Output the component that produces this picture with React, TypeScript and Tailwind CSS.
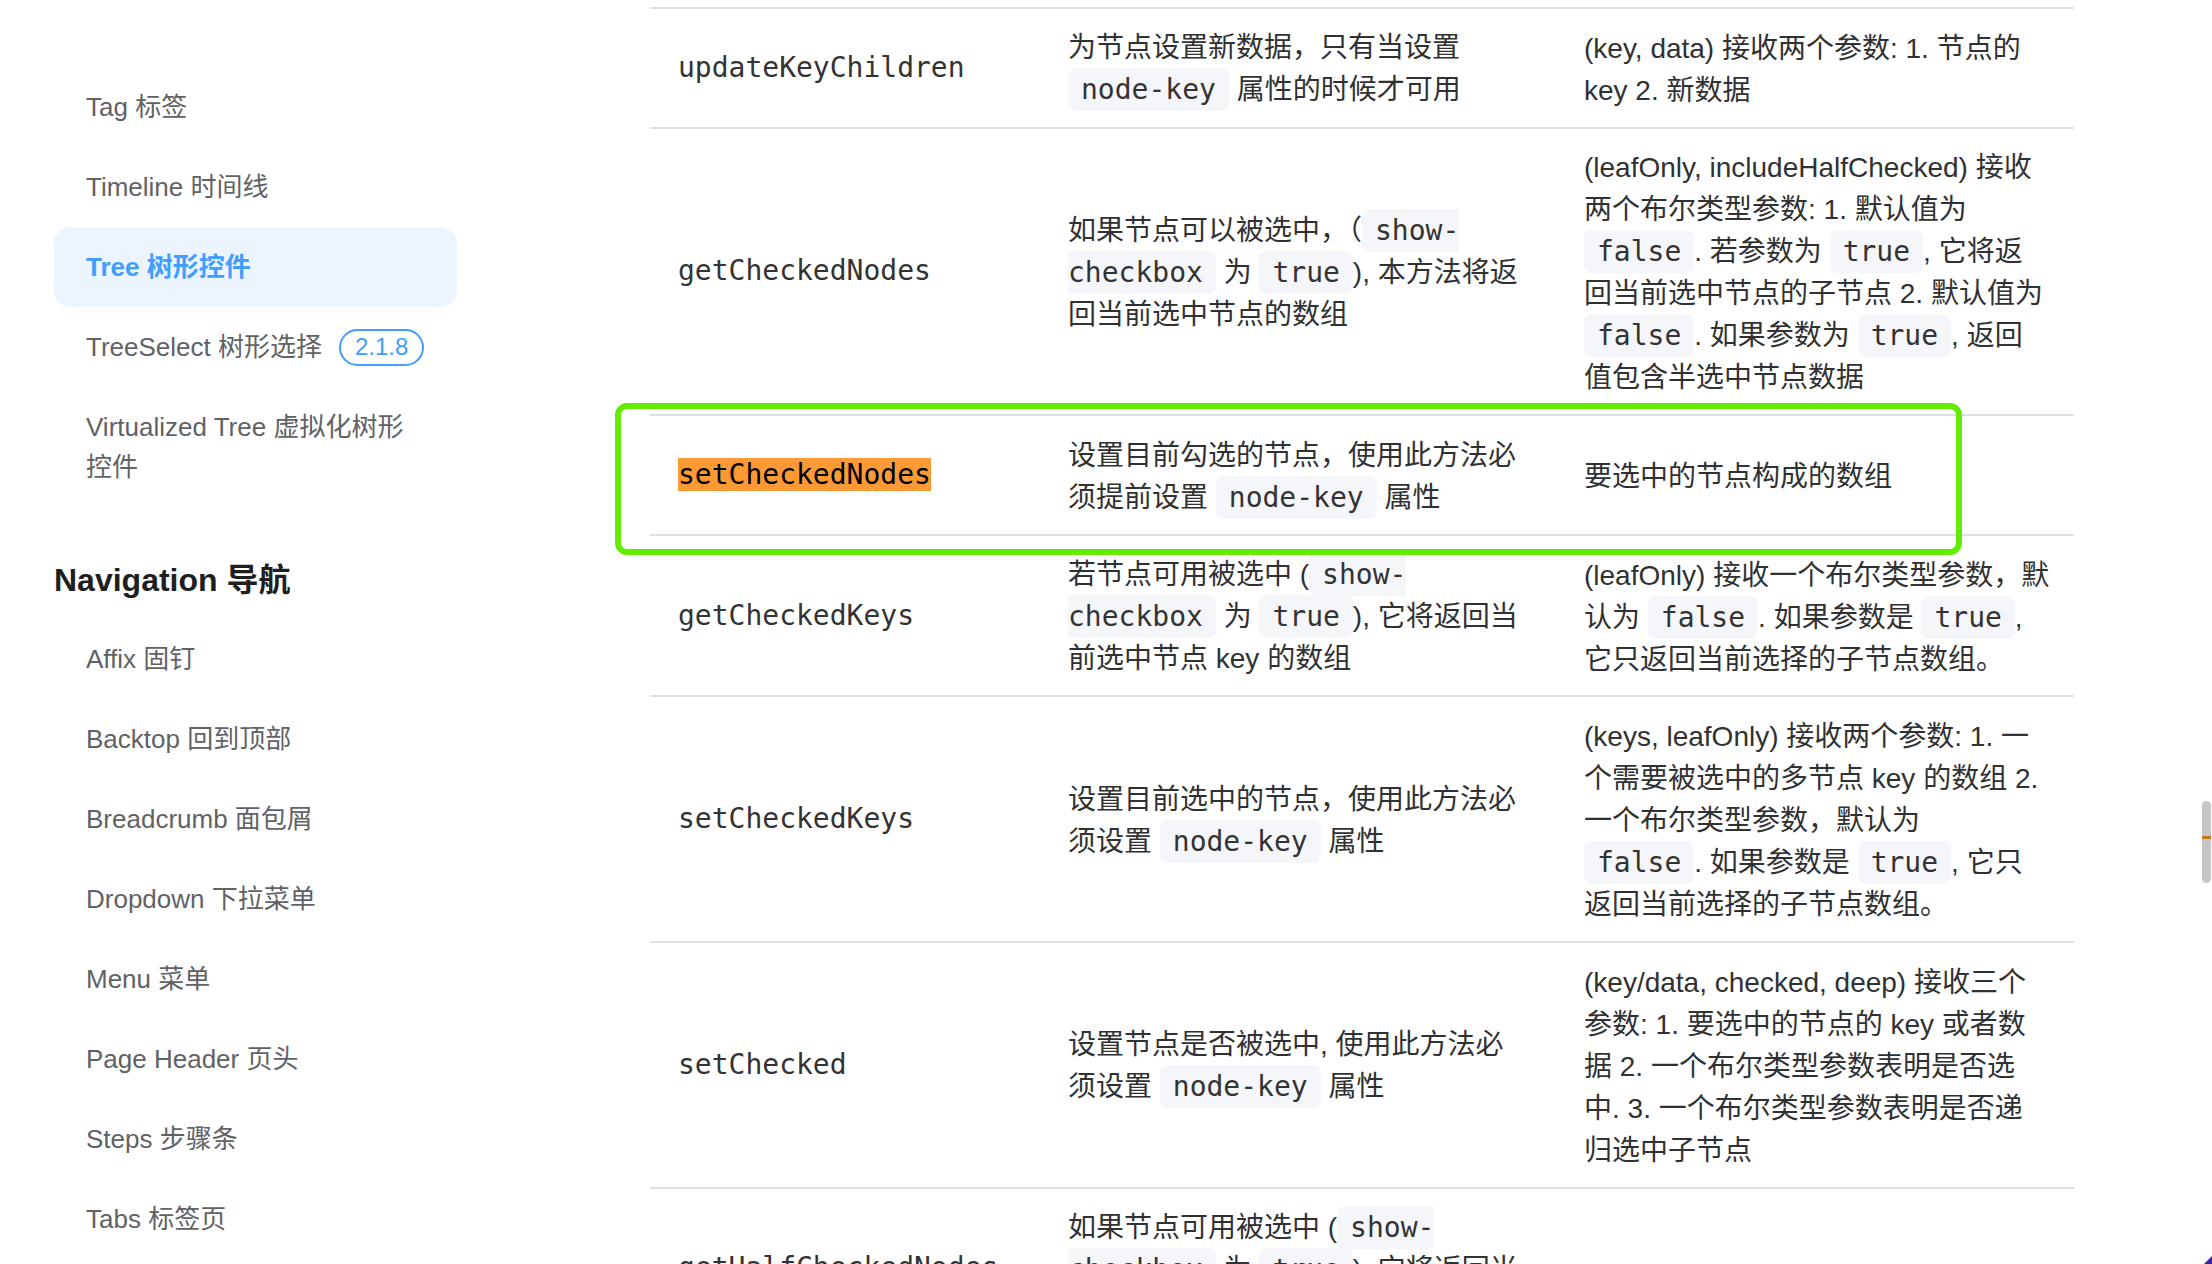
import React from "react";

const SANS = "font-['Liberation_Sans','Noto_Sans_CJK_SC',sans-serif]";
const MONO = "font-['DejaVu_Sans_Mono',monospace]";

const C = ({ children }: { children: React.ReactNode }) => (
  <code className="font-['DejaVu_Sans_Mono',monospace] text-[28px] bg-[#f5f6f9] rounded-[8px] px-[13px] py-[5px] text-[#333333]">
    {children}
  </code>
);

const Item = ({ children, active }: { children: React.ReactNode; active?: boolean }) => (
  <div
    className={
      active
        ? "h-[80px] rounded-[16px] bg-[#ecf5ff] pl-[32px] flex items-center text-[#409eff] font-semibold"
        : "h-[80px] pl-[32px] flex items-center text-[#606266]"
    }
  >
    {children}
  </div>
);

type Row = {
  name: React.ReactNode;
  desc: React.ReactNode;
  params: React.ReactNode;
};

const rows: Row[] = [
  {
    name: "updateKeyChildren",
    desc: (
      <>
        为节点设置新数据，只有当设置
        <br />
        <C>node-key</C> 属性的时候才可用
      </>
    ),
    params: (
      <>
        (key, data) 接收两个参数: 1. 节点的
        <br />
        key 2. 新数据
      </>
    ),
  },
  {
    name: "getCheckedNodes",
    desc: (
      <>
        如果节点可以被选中，（
        <C>
          show-
          <br />
          checkbox
        </C>{" "}
        为 <C>true</C>), 本方法将返
        <br />
        回当前选中节点的数组
      </>
    ),
    params: (
      <>
        (leafOnly, includeHalfChecked) 接收
        <br />
        两个布尔类型参数: 1. 默认值为
        <br />
        <C>false</C>. 若参数为 <C>true</C>, 它将返
        <br />
        回当前选中节点的子节点 2. 默认值为
        <br />
        <C>false</C>. 如果参数为 <C>true</C>, 返回
        <br />
        值包含半选中节点数据
      </>
    ),
  },
  {
    name: <span className="bg-[#fe9a35] text-black">setCheckedNodes</span>,
    desc: (
      <>
        设置目前勾选的节点，使用此方法必
        <br />
        须提前设置 <C>node-key</C> 属性
      </>
    ),
    params: <>要选中的节点构成的数组</>,
  },
  {
    name: "getCheckedKeys",
    desc: (
      <>
        若节点可用被选中 (
        <C>
          show-
          <br />
          checkbox
        </C>{" "}
        为 <C>true</C>), 它将返回当
        <br />
        前选中节点 key 的数组
      </>
    ),
    params: (
      <>
        (leafOnly) 接收一个布尔类型参数，默
        <br />
        认为 <C>false</C>. 如果参数是 <C>true</C>,
        <br />
        它只返回当前选择的子节点数组。
      </>
    ),
  },
  {
    name: "setCheckedKeys",
    desc: (
      <>
        设置目前选中的节点，使用此方法必
        <br />
        须设置 <C>node-key</C> 属性
      </>
    ),
    params: (
      <>
        (keys, leafOnly) 接收两个参数: 1. 一
        <br />
        个需要被选中的多节点 key 的数组 2.
        <br />
        一个布尔类型参数，默认为
        <br />
        <C>false</C>. 如果参数是 <C>true</C>, 它只
        <br />
        返回当前选择的子节点数组。
      </>
    ),
  },
  {
    name: "setChecked",
    desc: (
      <>
        设置节点是否被选中, 使用此方法必
        <br />
        须设置 <C>node-key</C> 属性
      </>
    ),
    params: (
      <>
        (key/data, checked, deep) 接收三个
        <br />
        参数: 1. 要选中的节点的 key 或者数
        <br />
        据 2. 一个布尔类型参数表明是否选
        <br />
        中. 3. 一个布尔类型参数表明是否递
        <br />
        归选中子节点
      </>
    ),
  },
  {
    name: "getHalfCheckedNodes",
    desc: (
      <>
        如果节点可用被选中 (
        <C>
          show-
          <br />
          checkbox
        </C>{" "}
        为 <C>true</C>), 它将返回当
        <br />
        前半选中的节点所组成的数组
      </>
    ),
    params: <>—</>,
  },
];

export default function App() {
  return (
    <div
      className={`relative w-[2212px] h-[1264px] overflow-hidden bg-white flex ${SANS}`}
    >
      {/* Sidebar */}
      <div className="w-[457px] shrink-0 pl-[54px] pt-[67px] text-[26px]">
        <Item>Tag 标签</Item>
        <Item>Timeline 时间线</Item>
        <Item active>Tree 树形控件</Item>
        <Item>
          TreeSelect 树形选择
          <span className="ml-[17px] inline-flex h-[37px] items-center rounded-full border-2 border-[#409eff] px-[14px] text-[24px] text-[#409eff]">
            2.1.8
          </span>
        </Item>
        <div className="py-[20px] pl-[32px] pr-[32px] leading-[40px] text-[#606266]">
          Virtualized Tree 虚拟化树形
          <br />
          控件
        </div>
        <div className="mt-[49px] mb-[15px] h-[48px] leading-[48px] text-[32px] font-bold text-[#1f1f1f]">
          Navigation 导航
        </div>
        <Item>Affix 固钉</Item>
        <Item>Backtop 回到顶部</Item>
        <Item>Breadcrumb 面包屑</Item>
        <Item>Dropdown 下拉菜单</Item>
        <Item>Menu 菜单</Item>
        <Item>Page Header 页头</Item>
        <Item>Steps 步骤条</Item>
        <Item>Tabs 标签页</Item>
      </div>

      {/* Main table */}
      <div className="ml-[193px] w-[1424px] shrink-0 pt-[7px] text-[28px] text-[#303133]">
        {rows.map((r, i) => (
          <div
            key={i}
            className="grid grid-cols-[390px_516px_518px] items-center border-t-2 border-[#dcdfe6]"
          >
            <div className={`px-[28px] py-[16.8px] leading-[42px] whitespace-nowrap text-[#333333] ${MONO}`}>
              {r.name}
            </div>
            <div className="px-[28px] pt-[18.4px] pb-[15.2px] leading-[42px] whitespace-nowrap">
              {r.desc}
            </div>
            <div className="px-[28px] pt-[18.8px] pb-[14.8px] leading-[42px] whitespace-nowrap">
              {r.params}
            </div>
          </div>
        ))}
      </div>

      {/* Green highlight frame */}
      <div className="absolute left-[615px] top-[403px] w-[1347px] h-[152px] rounded-[12px] border-[6px] border-[#63ec00] pointer-events-none" />

      {/* Overlay scrollbar thumb */}
      <div className="absolute right-[1px] top-[801px] w-[9px] h-[82px] rounded-full bg-[#c6c6c6]">
        <div className="mt-[35px] h-[3px] w-full bg-[#c47a1c]" />
      </div>
      <div className="absolute right-0 bottom-0 w-0 h-0 border-l-[8px] border-b-[8px] border-l-transparent border-b-[#3a20a8]" />
    </div>
  );
}
